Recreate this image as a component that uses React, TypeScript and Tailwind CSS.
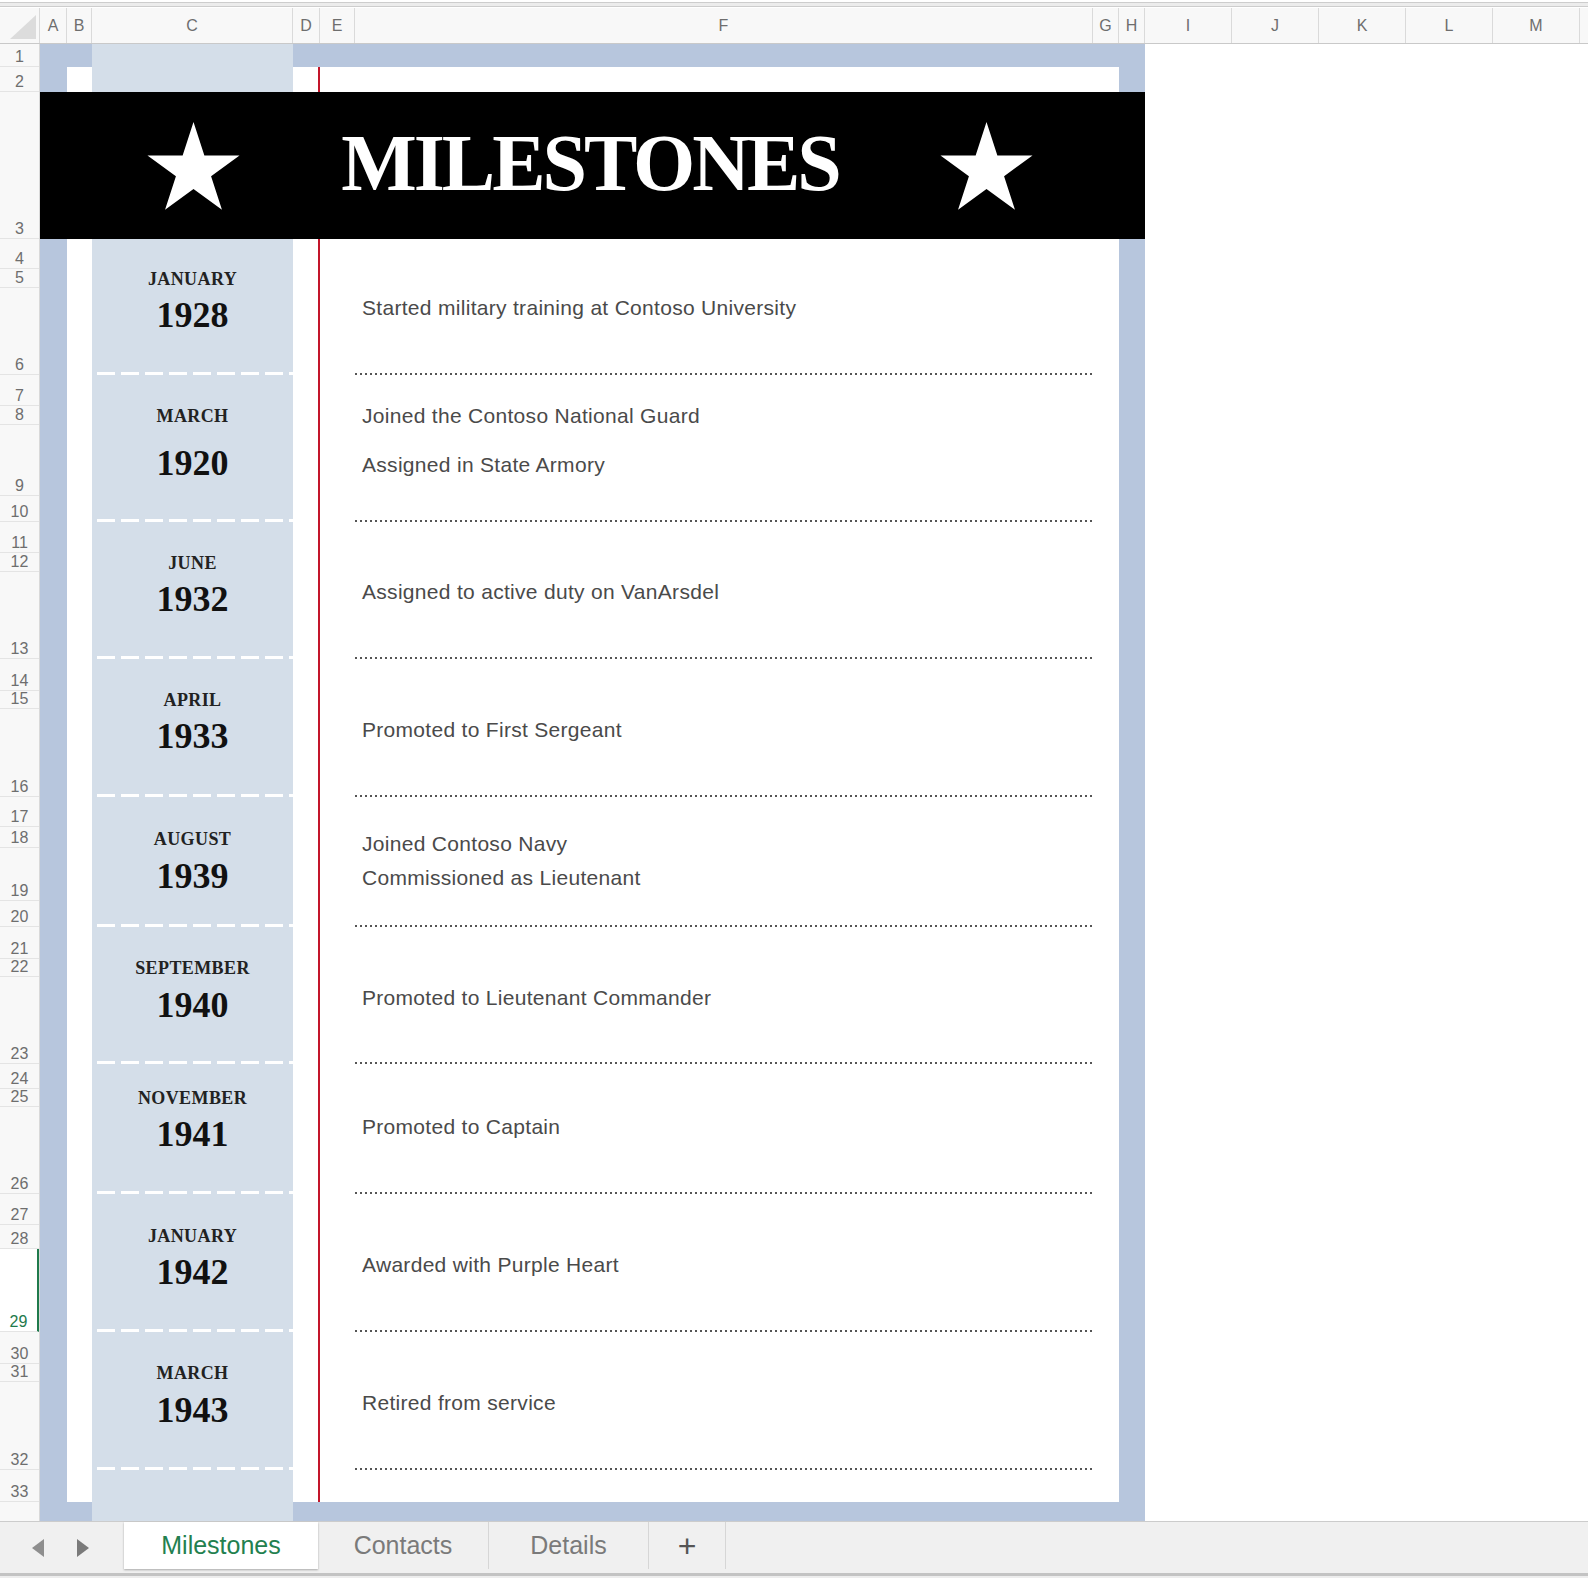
const SANS = "font-['Liberation_Sans',Arial,sans-serif]";
const SERIF = "font-['Liberation_Serif','Times_New_Roman',serif]";

const FRAME = "bg-[#b7c6dd]";
const PALE = "bg-[#d4dee9]";
const RED_LINE = "border-r-2 border-[#c3152a]";
const GRID = "grid grid-cols-[27px_25px_201px_27px_35px_738px_26px_26px]";

const HEADER_COLS = [
  { label: "A", w: "w-[27px]" },
  { label: "B", w: "w-[25px]" },
  { label: "C", w: "w-[201px]" },
  { label: "D", w: "w-[27px]" },
  { label: "E", w: "w-[35px]" },
  { label: "F", w: "w-[738px]" },
  { label: "G", w: "w-[26px]" },
  { label: "H", w: "w-[26px]" },
  { label: "I", w: "w-[87px]" },
  { label: "J", w: "w-[87px]" },
  { label: "K", w: "w-[87px]" },
  { label: "L", w: "w-[87px]" },
  { label: "M", w: "w-[87px]" },
];

// row header: label + height (labels sit at the bottom of each row, Mac style)
const ROWS = [
  { n: "1", h: "h-[23px]" },
  { n: "2", h: "h-[25px]" },
  { n: "3", h: "h-[147px]" },
  { n: "4", h: "h-[30px]" },
  { n: "5", h: "h-[19px]" },
  { n: "6", h: "h-[87px]" },
  { n: "7", h: "h-[31px]" },
  { n: "8", h: "h-[19px]" },
  { n: "9", h: "h-[71px]" },
  { n: "10", h: "h-[26px]" },
  { n: "11", h: "h-[31px]" },
  { n: "12", h: "h-[19px]" },
  { n: "13", h: "h-[87px]" },
  { n: "14", h: "h-[32px]" },
  { n: "15", h: "h-[18px]" },
  { n: "16", h: "h-[88px]" },
  { n: "17", h: "h-[30px]" },
  { n: "18", h: "h-[21px]" },
  { n: "19", h: "h-[53px]" },
  { n: "20", h: "h-[26px]" },
  { n: "21", h: "h-[32px]" },
  { n: "22", h: "h-[18px]" },
  { n: "23", h: "h-[87px]" },
  { n: "24", h: "h-[25px]" },
  { n: "25", h: "h-[18px]" },
  { n: "26", h: "h-[87px]" },
  { n: "27", h: "h-[31px]" },
  { n: "28", h: "h-[24px]" },
  { n: "29", h: "h-[83px]" },
  { n: "30", h: "h-[32px]" },
  { n: "31", h: "h-[18px]" },
  { n: "32", h: "h-[88px]" },
  { n: "33", h: "h-[32px]" },
];

type Entry = {
  month: string;
  year: string;
  lines: string[];
  h: string;
  mPt: string;
  yGap: string;
  tPt: string;
  tGap: string;
};

const ENTRIES: Entry[] = [
  {
    month: "JANUARY",
    year: "1928",
    lines: ["Started military training at Contoso University"],
    h: "h-[136px]",
    mPt: "pt-[30px]",
    yGap: "gap-[8px]",
    tPt: "pt-[57px]",
    tGap: "gap-0",
  },
  {
    month: "MARCH",
    year: "1920",
    lines: ["Joined the Contoso National Guard", "Assigned in State Armory"],
    h: "h-[147px]",
    mPt: "pt-[31px]",
    yGap: "gap-[19px]",
    tPt: "pt-[29px]",
    tGap: "gap-[25px]",
  },
  {
    month: "JUNE",
    year: "1932",
    lines: ["Assigned to active duty on VanArsdel"],
    h: "h-[137px]",
    mPt: "pt-[31px]",
    yGap: "gap-[8px]",
    tPt: "pt-[58px]",
    tGap: "gap-0",
  },
  {
    month: "APRIL",
    year: "1933",
    lines: ["Promoted to First Sergeant"],
    h: "h-[138px]",
    mPt: "pt-[31px]",
    yGap: "gap-[8px]",
    tPt: "pt-[59px]",
    tGap: "gap-0",
  },
  {
    month: "AUGUST",
    year: "1939",
    lines: ["Joined Contoso Navy", "Commissioned as Lieutenant"],
    h: "h-[130px]",
    mPt: "pt-[32px]",
    yGap: "gap-[9px]",
    tPt: "pt-[35px]",
    tGap: "gap-[10px]",
  },
  {
    month: "SEPTEMBER",
    year: "1940",
    lines: ["Promoted to Lieutenant Commander"],
    h: "h-[137px]",
    mPt: "pt-[31px]",
    yGap: "gap-[9px]",
    tPt: "pt-[59px]",
    tGap: "gap-0",
  },
  {
    month: "NOVEMBER",
    year: "1941",
    lines: ["Promoted to Captain"],
    h: "h-[130px]",
    mPt: "pt-[24px]",
    yGap: "gap-[8px]",
    tPt: "pt-[51px]",
    tGap: "gap-0",
  },
  {
    month: "JANUARY",
    year: "1942",
    lines: ["Awarded with Purple Heart"],
    h: "h-[138px]",
    mPt: "pt-[32px]",
    yGap: "gap-[8px]",
    tPt: "pt-[59px]",
    tGap: "gap-0",
  },
  {
    month: "MARCH",
    year: "1943",
    lines: ["Retired from service"],
    h: "h-[138px]",
    mPt: "pt-[31px]",
    yGap: "gap-[9px]",
    tPt: "pt-[59px]",
    tGap: "gap-0",
  },
];

function Star() {
  return (
    <svg width="93" height="88" viewBox="-46.5 -48.5 93 88" className="shrink-0">
      <polygon
        points="0,-48.4 10.87,-14.96 46.03,-14.96 17.58,5.71 28.45,39.16 0,18.49 -28.45,39.16 -17.58,5.71 -46.03,-14.96 -10.87,-14.96"
        fill="#ffffff"
      />
    </svg>
  );
}

function FrameRow({ h }: { h: string }) {
  return (
    <div className={`${GRID} ${h}`}>
      <div className={FRAME} />
      <div className={FRAME} />
      <div className={PALE} />
      <div className={FRAME} />
      <div className={FRAME} />
      <div className={FRAME} />
      <div className={FRAME} />
      <div className={FRAME} />
    </div>
  );
}

function InnerRow({ h }: { h: string }) {
  return (
    <div className={`${GRID} ${h}`}>
      <div className={FRAME} />
      <div className="bg-white" />
      <div className={PALE} />
      <div className={`bg-white ${RED_LINE}`} />
      <div className="bg-white" />
      <div className="bg-white" />
      <div className="bg-white" />
      <div className={FRAME} />
    </div>
  );
}

function Block({ e }: { e: Entry }) {
  return (
    <div className={`${GRID} ${e.h}`}>
      <div className={FRAME} />
      <div className="bg-white" />
      <div className={`flex flex-col ${PALE}`}>
        <div className={`flex flex-col items-center ${e.mPt} ${e.yGap}`}>
          <span
            className={`${SERIF} text-[18px] leading-[20px] font-bold tracking-[0.4px] text-[#222222]`}
          >
            {e.month}
          </span>
          <span className={`${SERIF} text-[36px] leading-[36px] font-bold text-[#111111]`}>
            {e.year}
          </span>
        </div>
        <div className="mt-auto ml-[5px] h-[3px] bg-[repeating-linear-gradient(to_right,#ffffff_0_18px,transparent_18px_24px)]" />
      </div>
      <div className={`bg-white ${RED_LINE}`} />
      <div className="bg-white" />
      <div className="flex flex-col bg-white">
        <div className={`flex flex-col pl-[7px] ${e.tPt} ${e.tGap}`}>
          {e.lines.map((line) => (
            <span
              key={line}
              className={`${SANS} text-[21px] leading-[24px] tracking-[0.3px] text-[#4a4a4a]`}
            >
              {line}
            </span>
          ))}
        </div>
        <div className="mt-auto h-[2px] bg-[repeating-linear-gradient(to_right,#555555_0_2px,transparent_2px_5px)]" />
      </div>
      <div className="bg-white" />
      <div className={FRAME} />
    </div>
  );
}

export default function App() {
  return (
    <div className={`relative flex h-[1578px] w-[1588px] flex-col overflow-hidden bg-white ${SANS}`}>
      {/* toolbar edge */}
      <div className="h-[8px] shrink-0 bg-white pt-[2px]">
        <div className="h-[5px] border-y border-[#cdcdcd] bg-[#ececec]" />
      </div>

      {/* column headers */}
      <div className="flex h-[36px] shrink-0 border-b border-[#c9c9c9] bg-[#f8f8f8]">
        <div className="flex w-[40px] shrink-0 items-end justify-end border-r border-[#d9d9d9] pr-[3px] pb-[4px]">
          <svg width="26" height="24" viewBox="0 0 26 24">
            <polygon points="26,0 26,24 0,24" fill="#dcdcdc" />
          </svg>
        </div>
        {HEADER_COLS.map((c) => (
          <div
            key={c.label}
            className={`flex shrink-0 items-center justify-center border-r border-[#dadada] text-[16px] text-[#6e6e6e] ${c.w}`}
          >
            {c.label}
          </div>
        ))}
        <div className="flex-1" />
      </div>

      {/* body */}
      <div className="flex h-[1477px] shrink-0">
        <div className="flex w-[40px] shrink-0 flex-col border-r border-[#d9d9d9] bg-[#f8f8f8]">
          {ROWS.map((r) => (
            <div
              key={r.n}
              className={`flex shrink-0 items-end justify-center border-b border-[#e4e4e4] text-[16px] leading-[18px] ${r.h} ${
                r.n === "29"
                  ? "border-r-2 border-r-[#1f7a4c] bg-white text-[#1f7a4c]"
                  : "text-[#6e6e6e]"
              }`}
            >
              {r.n}
            </div>
          ))}
          <div className="h-[19px] shrink-0" />
        </div>

        <div className="flex w-[1105px] shrink-0 flex-col">
          <FrameRow h="h-[23px]" />
          <InnerRow h="h-[25px]" />
          <div className="flex h-[147px] items-center bg-black pl-[107px]">
            <Star />
            <div
              className={`w-[700px] shrink-0 pb-[5px] text-center text-[80px] leading-[80px] font-bold tracking-[-3px] text-white ${SERIF}`}
            >
              MILESTONES
            </div>
            <Star />
          </div>
          {ENTRIES.map((e, i) => (
            <Block key={i} e={e} />
          ))}
          <InnerRow h="h-[32px]" />
          <FrameRow h="h-[19px]" />
        </div>
        <div className="flex-1 bg-white" />
      </div>

      {/* sheet tabs */}
      <div className="flex h-[57px] shrink-0 flex-col">
        <div className="flex h-[52px] border-t border-[#cccccc] bg-[#f0f0f0]">
          <div className="flex w-[124px] shrink-0 items-center gap-[33px] pl-[32px]">
            <svg width="12" height="18" viewBox="0 0 12 18">
              <polygon points="12,0 0,9 12,18" fill="#8e8e8e" />
            </svg>
            <svg width="12" height="18" viewBox="0 0 12 18">
              <polygon points="0,0 12,9 0,18" fill="#7a7a7a" />
            </svg>
          </div>
          <div className="flex h-[47px] w-[194px] shrink-0 items-center justify-center bg-white text-[25px] text-[#23804f] shadow-[0_1px_2px_rgba(0,0,0,0.3)]">
            Milestones
          </div>
          <div className="flex h-[47px] w-[171px] shrink-0 items-center justify-center border-r border-[#d6d6d6] text-[25px] text-[#7a7a7a]">
            Contacts
          </div>
          <div className="flex h-[47px] w-[160px] shrink-0 items-center justify-center border-r border-[#d6d6d6] text-[25px] text-[#7a7a7a]">
            Details
          </div>
          <div className="flex h-[47px] w-[77px] shrink-0 items-center justify-center border-r border-[#d6d6d6] text-[32px] leading-none text-[#555555]">
            +
          </div>
        </div>
        <div className="h-[3px] bg-[#c3c3c3]" />
        <div className="h-[2px] bg-[#ededed]" />
      </div>
    </div>
  );
}
